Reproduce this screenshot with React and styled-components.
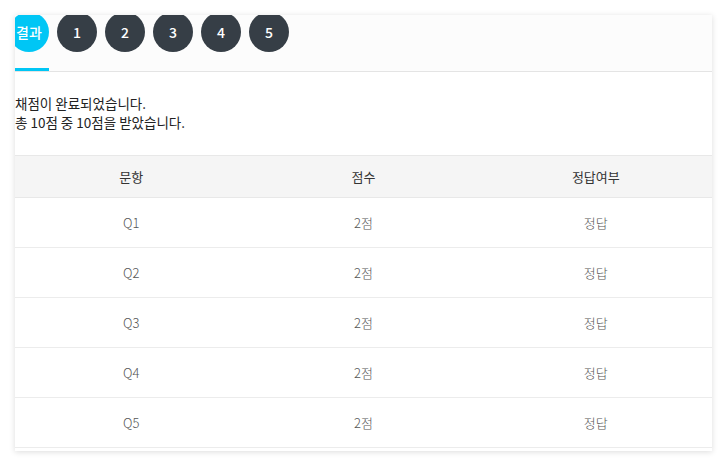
import React from "react";
import styled, { createGlobalStyle } from "styled-components";

const GlobalStyle = createGlobalStyle`
  body {
    margin: 0;
    padding: 15px;
    background: #ffffff;
    font-family: "Noto Sans CJK KR", "Noto Sans", sans-serif;
  }
`;

const tabs = ["결과", "1", "2", "3", "4", "5"];
const rows = [
  { q: "Q1", score: "2점", result: "정답" },
  { q: "Q2", score: "2점", result: "정답" },
  { q: "Q3", score: "2점", result: "정답" },
  { q: "Q4", score: "2점", result: "정답" },
  { q: "Q5", score: "2점", result: "정답" },
];

const App = () => {
  return (
    <>
      <GlobalStyle />
      <Card>
        <TabBar>
          <TabList>
            {tabs.map((t, i) => (
              <TabItem key={t}>
                <Circle active={i === 0}>{t}</Circle>
              </TabItem>
            ))}
          </TabList>
          <Indicator />
        </TabBar>
        <Message>
          채점이 완료되었습니다.
          <br />총 10점 중 10점을 받았습니다.
        </Message>
        <Table>
          <thead>
            <tr>
              <Th>문항</Th>
              <Th>점수</Th>
              <Th>정답여부</Th>
            </tr>
          </thead>
          <tbody>
            {rows.map((r) => (
              <tr key={r.q}>
                <Td>{r.q}</Td>
                <Td>{r.score}</Td>
                <Td>{r.result}</Td>
              </tr>
            ))}
          </tbody>
        </Table>
      </Card>
    </>
  );
};

const Card = styled.div`
  width: 697px;
  height: 436px;
  box-sizing: border-box;
  background: #fff;
  box-shadow: 0 1px 6px rgba(0, 0, 0, 0.14);
  overflow: hidden;
`;

const TabBar = styled.div`
  position: relative;
  height: 56px;
  background: #fcfcfc;
  border-bottom: 1px solid #e4e4e4;
  overflow: hidden;
`;

const TabList = styled.div`
  display: flex;
  gap: 8px;
  margin-left: -6px;
  margin-top: -3px;
`;

const TabItem = styled.div`
  flex: none;
`;

const Circle = styled.div`
  width: 40px;
  height: 40px;
  border-radius: 50%;
  display: flex;
  align-items: center;
  justify-content: center;
  background: ${(p) => (p.active ? "#00c6f5" : "#363e46")};
  color: #fff;
  font-size: 14px;
  font-weight: 500;
`;

const Indicator = styled.div`
  position: absolute;
  left: 0;
  bottom: 0;
  width: 34px;
  height: 3px;
  background: #00c6f5;
`;

const Message = styled.div`
  padding: 22px 0 23px;
  font-size: 13.5px;
  line-height: 19px;
  color: #222;
`;

const Table = styled.table`
  width: 100%;
  border-collapse: collapse;
  table-layout: fixed;
  border-bottom: 1px solid #e8e8e8;
`;

const Th = styled.th`
  height: 42px;
  box-sizing: border-box;
  background: #f5f5f5;
  border-top: 1px solid #e8e8e8;
  border-bottom: 1px solid #e8e8e8;
  font-size: 13px;
  font-weight: 400;
  color: #333;
  text-align: center;
  padding: 0;
`;

const Td = styled.td`
  height: 50px;
  box-sizing: border-box;
  border-bottom: 1px solid #ececec;
  font-size: 13px;
  font-weight: 300;
  color: #555;
  text-align: center;
  padding: 0;
`;

export default App;
